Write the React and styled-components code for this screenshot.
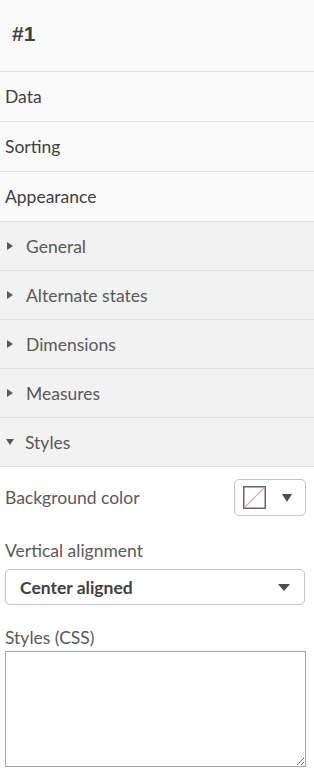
import React from "react";
import styled, { createGlobalStyle } from "styled-components";

const Global = createGlobalStyle`
  html, body { margin: 0; padding: 0; background: #fff; }
  body { font-family: Lato, "Noto Sans", sans-serif; color: #404040; }
`;

const Panel = styled.div`
  width: 314px;
  min-height: 784px;
  background: #fff;
`;

const Header = styled.div`
  height: 72px;
  box-sizing: border-box;
  display: flex;
  align-items: center;
  padding: 0 0 3px 12px;
  background: #fafafa;
  border-bottom: 1px solid #e0e0e0;
  font-family: "Liberation Sans", Arial, sans-serif;
  font-weight: bold;
  font-size: 21px;
  color: #404040;
`;

const Tab = styled.div`
  height: 49px;
  display: flex;
  align-items: center;
  padding-left: 5px;
  background: #fafafa;
  border-bottom: 1px solid #e0e0e0;
  font-size: 17.5px;
  color: #404040;
`;

const Section = styled.div`
  height: 48px;
  display: flex;
  align-items: center;
  gap: 12px;
  padding-left: 6px;
  background: #f2f2f2;
  border-bottom: 1px solid #e0e0e0;
  font-size: 17.5px;
  color: #595959;
`;

const Caret = styled.span`
  width: 0;
  height: 0;
  ${(p) =>
    p.open
      ? `border-left: 4.5px solid transparent; border-right: 4.5px solid transparent; border-top: 6px solid #595959; margin-right: -1px;`
      : `border-top: 4.5px solid transparent; border-bottom: 4.5px solid transparent; border-left: 6px solid #595959; margin-left: 1px; margin-right: 1px;`}
`;

const Body = styled.div`
  display: flex;
  flex-direction: column;
  padding: 12px 8px 0 5px;
`;

const InlineRow = styled.div`
  display: flex;
  align-items: center;
  justify-content: space-between;
`;

const Label = styled.div`
  font-size: 17.5px;
  line-height: 22px;
  color: #595959;
  margin-top: ${(p) => p.top || 0}px;
  margin-bottom: ${(p) => p.bottom || 0}px;
`;

const ColorButton = styled.div`
  width: 72px;
  height: 37px;
  box-sizing: border-box;
  border: 1px solid #c4c4c4;
  border-radius: 5px;
  display: flex;
  align-items: center;
  padding-left: 8px;
  gap: 16px;
  background: #fff;
`;

const Swatch = styled.svg`
  display: block;
`;

const Arrow = styled.span`
  width: 0;
  height: 0;
  border-left: ${(p) => p.half || 6}px solid transparent;
  border-right: ${(p) => p.half || 6}px solid transparent;
  border-top: ${(p) => p.tall || 7}px solid #4d4d4d;
`;

const Select = styled.div`
  height: 36px;
  box-sizing: border-box;
  border: 1px solid #c4c4c4;
  border-radius: 5px;
  display: flex;
  align-items: center;
  justify-content: space-between;
  padding: 0 14px 0 14px;
  margin-right: 1px;
  font-weight: bold;
  font-size: 17.5px;
  color: #404040;
`;

const TextArea = styled.textarea`
  display: block;
  width: 301px;
  height: 116px;
  box-sizing: border-box;
  border: 1px solid #a6a6a6;
  border-radius: 0;
  margin: 0;
  resize: both;
  font-family: inherit;
  outline: none;
`;

const tabs = ["Data", "Sorting", "Appearance"];
const sections = [
  { name: "General" },
  { name: "Alternate states" },
  { name: "Dimensions" },
  { name: "Measures" },
  { name: "Styles", open: true },
];

export default function App() {
  return (
    <Panel>
      <Global />
      <Header>#1</Header>
      {tabs.map((t) => (
        <Tab key={t}>{t}</Tab>
      ))}
      {sections.map((s) => (
        <Section key={s.name}>
          <Caret open={s.open} />
          {s.name}
        </Section>
      ))}
      <Body>
        <InlineRow>
          <Label>Background color</Label>
          <ColorButton>
            <Swatch width="23" height="23" viewBox="0 0 23 23">
              <rect x="0.75" y="0.75" width="21.5" height="21.5" fill="#fff" stroke="#666" strokeWidth="1.5" />
              <line x1="1.5" y1="21.5" x2="21.5" y2="1.5" stroke="#e0a0a8" strokeWidth="1.2" />
            </Swatch>
            <Arrow half={5.5} tall={8} />
          </ColorButton>
        </InlineRow>
        <Label top={24} bottom={7}>Vertical alignment</Label>
        <Select>
          Center aligned
          <Arrow />
        </Select>
        <Label top={22} bottom={2}>Styles (CSS)</Label>
        <TextArea />
      </Body>
    </Panel>
  );
}
